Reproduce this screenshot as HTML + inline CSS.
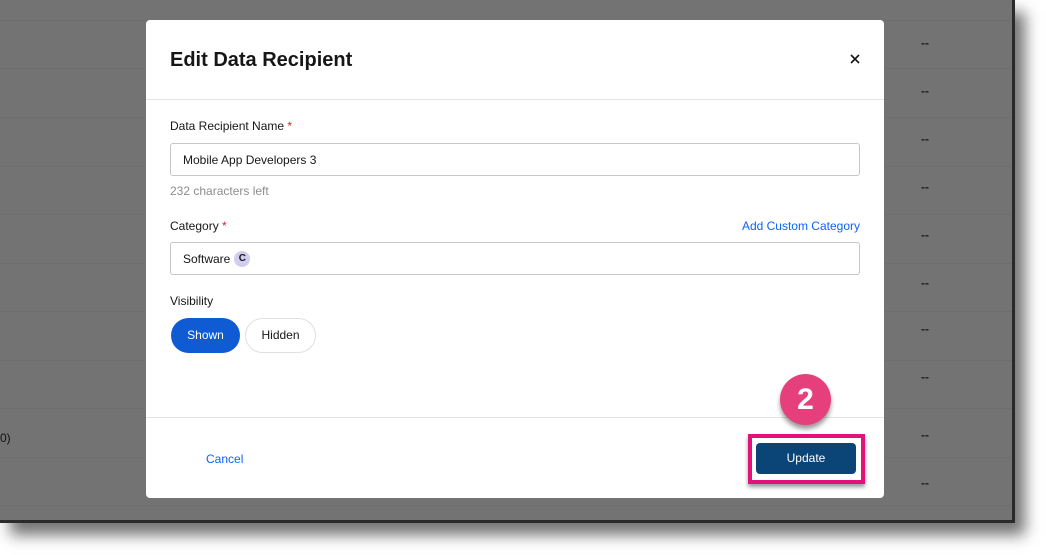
<!DOCTYPE html>
<html><head><style>
*{box-sizing:border-box;margin:0;padding:0}
body{width:1046px;height:555px;background:#fff;position:relative;overflow:hidden;font-family:"Liberation Sans",sans-serif}
.shot{position:absolute;left:0;top:0;width:1015px;height:523px;background:#737373;border-right:3px solid #2a2a2a;border-bottom:3px solid #2a2a2a;box-shadow:10px 12px 14px rgba(0,0,0,.55)}
.row{position:absolute;left:0;width:1012px;height:1px;background:#6e6e6e}
.dash{position:absolute;left:921px;font-size:12px;color:#222;font-weight:bold}
.dlg{position:absolute;left:146px;top:20px;width:738px;height:478px;background:#fff;border-radius:4px}
.t{position:absolute;left:24px;top:29px;font-size:20px;font-weight:bold;color:#161616}
.hr{position:absolute;left:0;width:738px;height:1px;background:#e4e4e4}
.lbl{position:absolute;left:24px;font-size:12px;color:#161616}
.lbl b{color:#da1e28;font-weight:normal}
.in{position:absolute;left:24px;width:690px;height:33px;border:1px solid #c6c6c6;border-radius:3px;font-size:12px;color:#161616;padding:0 12px;display:flex;align-items:center}
.c{display:inline-block;width:16px;height:16px;border-radius:8px;background:#d0cdf0;font-size:10px;font-weight:bold;text-align:center;line-height:16px;margin-left:4px}
.pill{position:absolute;top:298px;height:35px;border-radius:18px;font-size:12px;text-align:center;line-height:35px}
</style></head><body>
<div class="shot">
<div class="row" style="top:20px"></div><div class="row" style="top:68px"></div><div class="row" style="top:117px"></div><div class="row" style="top:166px"></div><div class="row" style="top:214px"></div><div class="row" style="top:263px"></div><div class="row" style="top:311px"></div><div class="row" style="top:360px"></div><div class="row" style="top:408px"></div><div class="row" style="top:457px"></div><div class="row" style="top:505px"></div>
<div class="dash" style="top:36px">--</div><div class="dash" style="top:84px">--</div><div class="dash" style="top:132px">--</div><div class="dash" style="top:180px">--</div><div class="dash" style="top:228px">--</div><div class="dash" style="top:276px">--</div><div class="dash" style="top:322px">--</div><div class="dash" style="top:370px">--</div><div class="dash" style="top:428px">--</div><div class="dash" style="top:476px">--</div>
<div style="position:absolute;left:0;top:431px;font-size:12px;color:#111">0)</div>
</div>
<div class="dlg">
<div class="t">Edit Data Recipient</div>
<svg style="position:absolute;left:704px;top:34px" width="10" height="10" viewBox="0 0 10 10"><path d="M1 1L9 9M9 1L1 9" stroke="#161616" stroke-width="1.6"/></svg>
<div class="hr" style="top:79px"></div>
<div class="lbl" style="top:99px">Data Recipient Name <b>*</b></div>
<div class="in" style="top:123px">Mobile App Developers 3</div>
<div class="lbl" style="top:164px;color:#8d8d8d">232 characters left</div>
<div class="lbl" style="top:199px">Category <b>*</b></div>
<div style="position:absolute;right:24px;top:199px;font-size:12px;color:#0f62fe">Add Custom Category</div>
<div class="in" style="top:222px">Software<span class="c">C</span></div>
<div class="lbl" style="top:274px">Visibility</div>
<div class="pill" style="left:25px;width:69px;background:#0f5bd4;color:#fff">Shown</div>
<div class="pill" style="left:99px;width:71px;border:1px solid #e0e0e0;color:#161616;line-height:33px">Hidden</div>
<div class="hr" style="top:397px"></div>
<div style="position:absolute;left:60px;top:432px;font-size:12px;color:#0f62fe">Cancel</div>
</div>
<div style="position:absolute;left:748px;top:434px;width:117px;height:50px;border:4px solid #e2127a;background:#fff;box-shadow:0 3px 4px rgba(0,0,0,.4)"></div>
<div style="position:absolute;left:756px;top:443px;width:100px;height:31px;border-radius:4px;background:#0b4477;color:#fff;font-size:12px;text-align:center;line-height:31px">Update</div>
<div style="position:absolute;left:780px;top:374px;width:51px;height:51px;border-radius:50%;background:#e5407b;color:#fff;font-size:30px;font-weight:bold;text-align:center;line-height:51px;box-shadow:0 4px 5px rgba(0,0,0,.4)">2</div>
</body></html>
